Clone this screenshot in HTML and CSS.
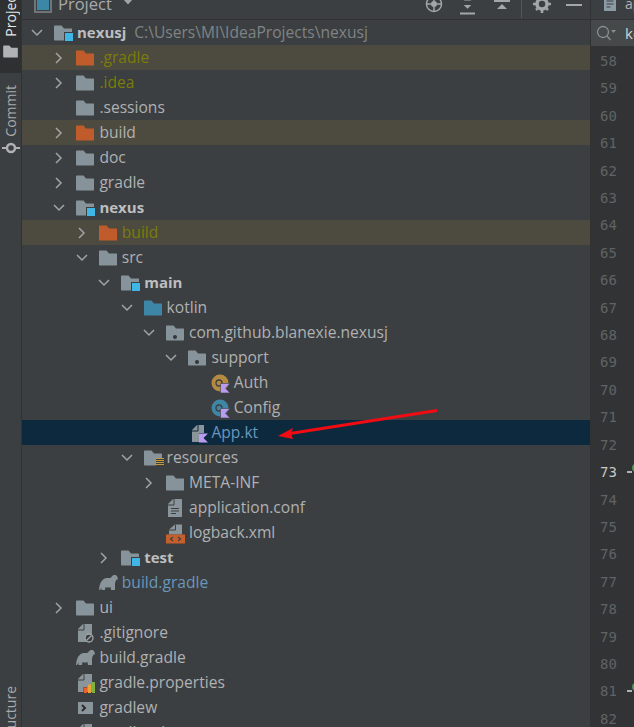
FILE: index.html
```html
<!DOCTYPE html>
<html lang="en">
<head>
<meta charset="utf-8">
<title>Project</title>
<link rel="stylesheet" href="styles.css">
</head>
<body>
<svg class="defs" width="0" height="0" aria-hidden="true">
  <symbol id="folder" viewBox="0 0 18 16"><path d="M0 1.500C0 .8.500.500 1 .500h6.500L10 3.500h7.500c.3 0 .5.2.5.5v11c0 .4-.3.5-.5.5H.8C.3 15.500 0 15 0 14.500z"/></symbol>
  <symbol id="doc" viewBox="0 0 18 18"><path d="M7 0h9v18H2V5z" fill="#8a959b"/><path d="M8 0v6H2" fill="none" stroke="#3c3f41"/></symbol>
  <symbol id="elephant" viewBox="0 0 19 15"><path d="M0 15C.5 8 3 3.500 8 3c2-.2 3.500.5 4.500-1 1-2 3-2.500 4.500-1.800 2 1 2 4 1.500 4.800l-1-.5C17 6 16 7 16 9v6h-4l-.5-3c-1.500.7-3.500.7-5 0L6 15H2.500v-2C2 13.500 1.500 14 1 15z" fill="#8a959b"/></symbol>
</svg>

<div class="app">
  <nav class="stripe">
    <div class="stab stab-on">
      <span class="vtext vtext-on">Project</span>
      <svg class="sicon-folder"><use href="#folder"/></svg>
    </div>
    <div class="stab stab-commit">
      <span class="vtext">Commit</span>
      <svg class="sicon-commit" viewBox="0 0 18 14"><circle cx="9" cy="7" r="4" fill="none" stroke="#afb1b3" stroke-width="2.500"/><path d="M0 6h4v2H0zM14 6h4v2h-4z" fill="#afb1b3"/></svg>
    </div>
    <div class="stripe-fill"></div>
    <div class="stab stab-structure"><span class="vtext">Structure</span></div>
  </nav>

  <section class="panel">
    <header class="phead">
      <svg class="phead-square" viewBox="0 0 18 18"><rect x="1" y="1" width="16" height="16" fill="none" stroke="#6e7477" stroke-width="2"/><rect x="3" y="4" width="12" height="11" fill="#3d87a6"/></svg>
      <span class="phead-title">Project</span>
      <svg class="phead-caret" viewBox="0 0 10 6"><path d="M0 0h10L5 5.500z" fill="#a0a4a6"/></svg>
      <div class="phead-tools">
        <svg class="tool tool-target" viewBox="0 0 18 18"><circle cx="9" cy="9" r="7.500" fill="none" stroke="#a3a7a9" stroke-width="1.500"/><circle cx="9" cy="9" r="3" fill="#a3a7a9"/><path d="M9 1v5M9 12v5M1 9h5M12 9h5" stroke="#a3a7a9" stroke-width="1.500"/></svg>
        <svg class="tool tool-expand" viewBox="0 0 16 18"><path d="M0 16h16v2H0zM4 3h8L8 0zM4 8h8l-4 4z" fill="#a3a7a9"/></svg>
        <svg class="tool tool-collapse" viewBox="0 0 16 18"><path d="M0 3h16v2H0zM3 12h10L8 7z" fill="#a3a7a9"/></svg>
        <span class="tool-sep"></span>
        <svg class="tool tool-gear" viewBox="0 0 18 18"><circle cx="9" cy="9" r="5" fill="none" stroke="#a3a7a9" stroke-width="3.500"/><path d="M9 0v18M0 9h18M3 3l12 12M15 3L3 15" stroke="#a3a7a9" stroke-width="2.500" stroke-dasharray="3 12 3"/></svg>
        <span class="tool-min"></span>
      </div>
    </header>

    <ul class="tree">
      <li class="row d0"><svg class="chev" viewBox="0 0 16 16"><path d="M3 5l5 5 5-5"/></svg><svg class="ic i-grey"><use href="#folder"/></svg><i class="mod"></i><b class="t t-b">nexusj</b><span class="t t-path">C:\Users\MI\IdeaProjects\nexusj</span></li>
      <li class="row d1 excl"><svg class="chev" viewBox="0 0 16 16"><path d="M5 3l5 5-5 5"/></svg><svg class="ic i-orange"><use href="#folder"/></svg><span class="t t-olive">.gradle</span></li>
      <li class="row d1"><svg class="chev" viewBox="0 0 16 16"><path d="M5 3l5 5-5 5"/></svg><svg class="ic i-grey"><use href="#folder"/></svg><span class="t t-olive">.idea</span></li>
      <li class="row d1"><span class="chev"></span><svg class="ic i-grey"><use href="#folder"/></svg><span class="t">.sessions</span></li>
      <li class="row d1 excl"><svg class="chev" viewBox="0 0 16 16"><path d="M5 3l5 5-5 5"/></svg><svg class="ic i-orange"><use href="#folder"/></svg><span class="t">build</span></li>
      <li class="row d1"><svg class="chev" viewBox="0 0 16 16"><path d="M5 3l5 5-5 5"/></svg><svg class="ic i-grey"><use href="#folder"/></svg><span class="t">doc</span></li>
      <li class="row d1"><svg class="chev" viewBox="0 0 16 16"><path d="M5 3l5 5-5 5"/></svg><svg class="ic i-grey"><use href="#folder"/></svg><span class="t">gradle</span></li>
      <li class="row d1"><svg class="chev" viewBox="0 0 16 16"><path d="M3 5l5 5 5-5"/></svg><svg class="ic i-grey"><use href="#folder"/></svg><i class="mod"></i><b class="t t-b">nexus</b></li>
      <li class="row d2 excl"><svg class="chev" viewBox="0 0 16 16"><path d="M5 3l5 5-5 5"/></svg><svg class="ic i-orange"><use href="#folder"/></svg><span class="t t-olive">build</span></li>
      <li class="row d2"><svg class="chev" viewBox="0 0 16 16"><path d="M3 5l5 5 5-5"/></svg><svg class="ic i-grey"><use href="#folder"/></svg><span class="t">src</span></li>
      <li class="row d3"><svg class="chev" viewBox="0 0 16 16"><path d="M3 5l5 5 5-5"/></svg><svg class="ic i-grey"><use href="#folder"/></svg><i class="mod"></i><b class="t t-b">main</b></li>
      <li class="row d4"><svg class="chev" viewBox="0 0 16 16"><path d="M3 5l5 5 5-5"/></svg><svg class="ic i-blue"><use href="#folder"/></svg><span class="t">kotlin</span></li>
      <li class="row d5"><svg class="chev" viewBox="0 0 16 16"><path d="M3 5l5 5 5-5"/></svg><svg class="ic i-grey"><use href="#folder"/></svg><i class="pkg"></i><span class="t">com.github.blanexie.nexusj</span></li>
      <li class="row d6"><svg class="chev" viewBox="0 0 16 16"><path d="M3 5l5 5 5-5"/></svg><svg class="ic i-grey"><use href="#folder"/></svg><i class="pkg"></i><span class="t">support</span></li>
      <li class="row d7"><span class="chev"></span><svg class="ic ic-tall" viewBox="0 0 18 18"><circle cx="9" cy="9" r="8.500" fill="#b38a3f"/><circle cx="8" cy="9" r="3" fill="none" stroke="#3c3f41" stroke-width="1.300"/><path d="M9.500 9.500h9.500l-4.500 4.750L19 19H9.500z" fill="#b99bf0" stroke="#3c3f41" stroke-width=".6"/></svg><span class="t">Auth</span></li>
      <li class="row d7"><span class="chev"></span><svg class="ic ic-tall" viewBox="0 0 18 18"><circle cx="9" cy="9" r="8.500" fill="#3f86a5"/><circle cx="8" cy="9" r="3" fill="none" stroke="#3c3f41" stroke-width="1.300"/><path d="M9.500 9.500h9.500l-4.500 4.750L19 19H9.500z" fill="#b99bf0" stroke="#3c3f41" stroke-width=".6"/></svg><span class="t">Config</span></li>
      <li class="row d6 sel"><span class="chev"></span><svg class="ic ic-tall" viewBox="0 0 18 18"><path d="M9 1h7v8h-5v9H4V6z" fill="#8a959b"/><path d="M10 1v6H4" fill="none" stroke="#0d293e"/><path d="M11 9.500h9l-4.500 4.500 4.500 4.500h-9z" fill="#b99bf0"/></svg><span class="t t-mod">App.kt</span></li>
      <li class="row d4"><svg class="chev" viewBox="0 0 16 16"><path d="M3 5l5 5 5-5"/></svg><svg class="ic i-grey"><use href="#folder"/></svg><i class="res"></i><span class="t">resources</span></li>
      <li class="row d5"><svg class="chev" viewBox="0 0 16 16"><path d="M5 3l5 5-5 5"/></svg><svg class="ic i-grey"><use href="#folder"/></svg><span class="t">META-INF</span></li>
      <li class="row d5"><span class="chev"></span><svg class="ic ic-tall" viewBox="0 0 18 18"><use href="#doc" width="18" height="18"/><path d="M5 9.500h8M5 12h8M5 14.500h5" stroke="#3c3f41"/></svg><span class="t">application.conf</span></li>
      <li class="row d5"><span class="chev"></span><svg class="ic ic-tall" viewBox="0 0 18 18"><path d="M9 .5h7v10H3V5.500z" fill="#8a959b"/><path d="M9.500 .5v5.500H3" fill="none" stroke="#3c3f41"/><rect y="10.500" width="19" height="9" fill="#c75f2c"/><path d="M7 13l-2.500 2L7 17M12 13l2.500 2-2.500 2" fill="none" stroke="#3c3f41" stroke-width="1.200"/></svg><span class="t">logback.xml</span></li>
      <li class="row d3"><svg class="chev" viewBox="0 0 16 16"><path d="M5 3l5 5-5 5"/></svg><svg class="ic i-grey"><use href="#folder"/></svg><i class="mod"></i><b class="t t-b">test</b></li>
      <li class="row d2"><span class="chev"></span><svg class="ic ic-ele"><use href="#elephant"/></svg><span class="t t-mod">build.gradle</span></li>
      <li class="row d1"><svg class="chev" viewBox="0 0 16 16"><path d="M5 3l5 5-5 5"/></svg><svg class="ic i-grey"><use href="#folder"/></svg><span class="t">ui</span></li>
      <li class="row d1"><span class="chev"></span><svg class="ic ic-tall" viewBox="0 0 18 18"><use href="#doc" width="18" height="18"/><circle cx="13" cy="14" r="4" fill="#3c3f41" stroke="#a0a6a9" stroke-width="1.300"/><path d="M10.500 16.500l5-5" stroke="#a0a6a9" stroke-width="1.300"/></svg><span class="t">.gitignore</span></li>
      <li class="row d1"><span class="chev"></span><svg class="ic ic-ele"><use href="#elephant"/></svg><span class="t">build.gradle</span></li>
      <li class="row d1"><span class="chev"></span><svg class="ic ic-tall" viewBox="0 0 18 18"><use href="#doc" width="18" height="18"/><rect x="7.500" y="13" width="3.500" height="6" fill="#3c3f41"/><rect x="8" y="13.500" width="3" height="5.500" fill="#e8622a"/><rect x="12" y="10.500" width="3" height="8.500" fill="#e8a33a"/><rect x="16" y="8" width="3" height="11" fill="#7fb13d"/></svg><span class="t">gradle.properties</span></li>
      <li class="row d1"><span class="chev"></span><svg class="ic ic-tall" viewBox="0 0 18 18"><rect x="2" y="3" width="15" height="12" fill="#8a959b"/><path d="M6 6l3 3-3 3" fill="none" stroke="#2b2d2f" stroke-width="2"/></svg><span class="t">gradlew</span></li>
      <li class="row d1"><span class="chev"></span><svg class="ic ic-tall" viewBox="0 0 18 18"><use href="#doc" width="18" height="18"/></svg><span class="t">gradlew.bat</span></li>
    </ul>
  </section>

  <section class="editor">
    <div class="etabs">
      <svg class="etab-icon" viewBox="0 0 12 14"><path d="M0 0h12v14H0z" fill="#8a9ba6"/><path d="M2.500 4h7M2.500 7h7M2.500 10h4" stroke="#3c3f41"/></svg>
      <span class="etab-name">app.conf</span>
    </div>
    <div class="esearch">
      <svg class="esearch-icon" viewBox="0 0 20 16"><circle cx="7" cy="7" r="5.500" fill="none" stroke="#8a8e90" stroke-width="1.300"/><path d="M11 11l3.500 4" stroke="#8a8e90" stroke-width="1.300"/><path d="M15 5h5l-2.500 3z" fill="#8a8e90"/></svg>
      <span class="esearch-text">kotlin</span>
    </div>
    <ol class="gutter">
      <li>58</li><li>59</li><li>60</li><li>61</li><li>62</li><li>63</li><li>64</li><li>65</li><li>66</li><li>67</li><li>68</li><li>69</li><li>70</li><li>71</li><li>72</li>
      <li class="cur">73<i class="run"></i></li>
      <li>74</li><li>75</li><li>76</li><li>77</li><li>78</li><li>79</li><li>80</li>
      <li>81<i class="run"></i></li>
      <li>82</li>
    </ol>
  </section>
</div>

<svg class="arrow" viewBox="0 0 634 727" aria-hidden="true">
  <path d="M437 410.500L290 433.500" stroke="#f00c12" stroke-width="3"/>
  <path d="M278 436L293 428 291 433.500 293 439z" fill="#f00c12"/>
</svg>
</body>
</html>
```
FILE: styles.css
```css
* { box-sizing: border-box; }
html, body { margin: 0; height: 100%; overflow: hidden; background: #3c3f41; }
body { font-family: "Open Sans", "Noto Sans", sans-serif; color: #afb1b3; position: relative; }
.defs { position: absolute; }
.app { display: flex; height: 727px; overflow: hidden; }

.stripe { width: 22px; flex: none; display: flex; flex-direction: column; border-right: 1px solid #323232; background: #3c3f41; overflow: hidden; }
.stab { display: flex; flex-direction: column; align-items: center; flex: none; }
.stab-on { height: 73px; background: #2e3032; justify-content: flex-end; padding-bottom: 15px; }
.stab-commit { padding-top: 12px; }
.stripe-fill { flex: 1; }
.stab-structure { margin-bottom: -20px; }
.vtext { writing-mode: vertical-rl; transform: rotate(180deg); font-size: 14px; line-height: 20px; white-space: nowrap; flex: none; color: #a8aaac; }
.vtext-on { color: #e4e6e8; }
.sicon-folder { width: 15px; height: 13px; flex: none; margin-top: 8px; fill: #afb3b5; }
.sicon-commit { width: 18px; height: 14px; flex: none; margin-top: 4px; }

.panel { width: 568px; flex: none; display: flex; flex-direction: column; overflow: hidden; }
.phead { height: 20px; flex: none; display: flex; align-items: center; padding: 0 0 12px 12px; border-bottom: 1px solid #323232; overflow: hidden; }
.phead-square { width: 18px; height: 18px; flex: none; }
.phead-title { margin-left: 6px; font-size: 16.500px; line-height: 20px; color: #a8aaac; }
.phead-caret { width: 10px; height: 6px; margin-left: 11px; flex: none; margin-top: -4px; }
.phead-tools { margin-left: auto; display: flex; align-items: center; flex: none; padding-right: 8px; }
.tool { flex: none; }
.tool-target { width: 18px; height: 18px; }
.tool-expand { width: 15px; height: 18px; margin-left: 17px; margin-top: 4px; }
.tool-collapse { width: 16px; height: 18px; margin-left: 19px; margin-top: 4px; }
.tool-sep { width: 1px; height: 28px; background: #515658; margin-left: 11px; flex: none; }
.tool-gear { width: 18px; height: 18px; margin-left: 11px; }
.tool-min { width: 16px; height: 2px; background: #a3a7a9; margin-left: 15px; margin-top: 2px; flex: none; }

.tree { list-style: none; margin: 0; padding: 0; flex: 1; }
.row { height: 25px; display: flex; align-items: center; position: relative; white-space: nowrap; }
.d0 { padding-left: 7px; }
.d1 { padding-left: 29.4px; }
.d2 { padding-left: 51.8px; }
.d3 { padding-left: 74.2px; }
.d4 { padding-left: 96.6px; }
.d5 { padding-left: 119px; }
.d6 { padding-left: 141.4px; }
.d7 { padding-left: 163.8px; }
.excl { background: #4d4a3f; }
.sel { background: #0d293e; }
.chev { width: 16px; height: 16px; flex: none; fill: none; stroke: #a0a4a6; stroke-width: 1.500; }
.ic { width: 18px; height: 16px; flex: none; margin-left: 9px; overflow: visible; }
.ic-tall { height: 18px; }
.ic-ele { width: 19px; height: 15px; margin-right: -1px; }
.i-grey { fill: #87939a; }
.i-orange { fill: #c05c2c; }
.i-blue { fill: #3d86a6; }
.mod, .pkg, .res { position: absolute; top: 13px; display: block; }
.t { margin-left: 5px; font-size: 15.600px; line-height: 25px; color: #afb1b3; font-weight: 400; }
.t-b { font-weight: 700; color: #bcbec0; font-size: 15px; }
.t-olive { color: #7b7d08; }
.t-mod { color: #6897bb; }
.t-path { color: #7f8385; margin-left: 8px; }
.mod { width: 8px; height: 8px; background: #3fb6e6; box-shadow: 0 0 0 1px #3c3f41; margin-left: 36px; }
.pkg { width: 4px; height: 4px; border-radius: 50%; background: #33363a; margin-top: 2px; margin-left: 32px; }
.res { width: 8px; height: 8px; margin-left: 37px; background: repeating-linear-gradient(#c59a3c 0 1px, #3c3f41 1px 2px); }

.editor { flex: 1; min-width: 0; display: flex; flex-direction: column; border-left: 1px solid #323232; background: #313335; overflow: hidden; }
.etabs { height: 20px; flex: none; display: flex; align-items: center; padding: 0 0 12px 13px; background: #3c3f41; border-bottom: 1px solid #323232; overflow: hidden; }
.etab-icon { width: 12px; height: 14px; flex: none; }
.etab-name { margin-left: 9px; font-size: 14px; color: #afb1b3; white-space: nowrap; }
.esearch { height: 26px; flex: none; display: flex; align-items: center; padding-left: 5px; background: #45494a; }
.esearch-icon { width: 20px; height: 16px; flex: none; }
.esearch-text { margin-left: 9px; font-size: 15px; color: #d0d2d4; white-space: nowrap; }
.gutter { list-style: none; margin: 0; padding: 2px 0 0 9px; }
.gutter li { height: 27.42px; line-height: 27.42px; font-family: "DejaVu Sans Mono", monospace; font-size: 14px; color: #606366; position: relative; white-space: nowrap; }
.gutter .cur { color: #c8c8c8; }
.run { position: absolute; left: 32px; top: 5px; width: 8px; height: 8px; border-radius: 50%; background: #499c54; }
.run::before { content: ""; position: absolute; left: -5px; top: 7px; width: 5px; height: 2px; background: #afb1b3; }

.arrow { position: absolute; left: 0; top: 0; width: 634px; height: 727px; pointer-events: none; }
```
